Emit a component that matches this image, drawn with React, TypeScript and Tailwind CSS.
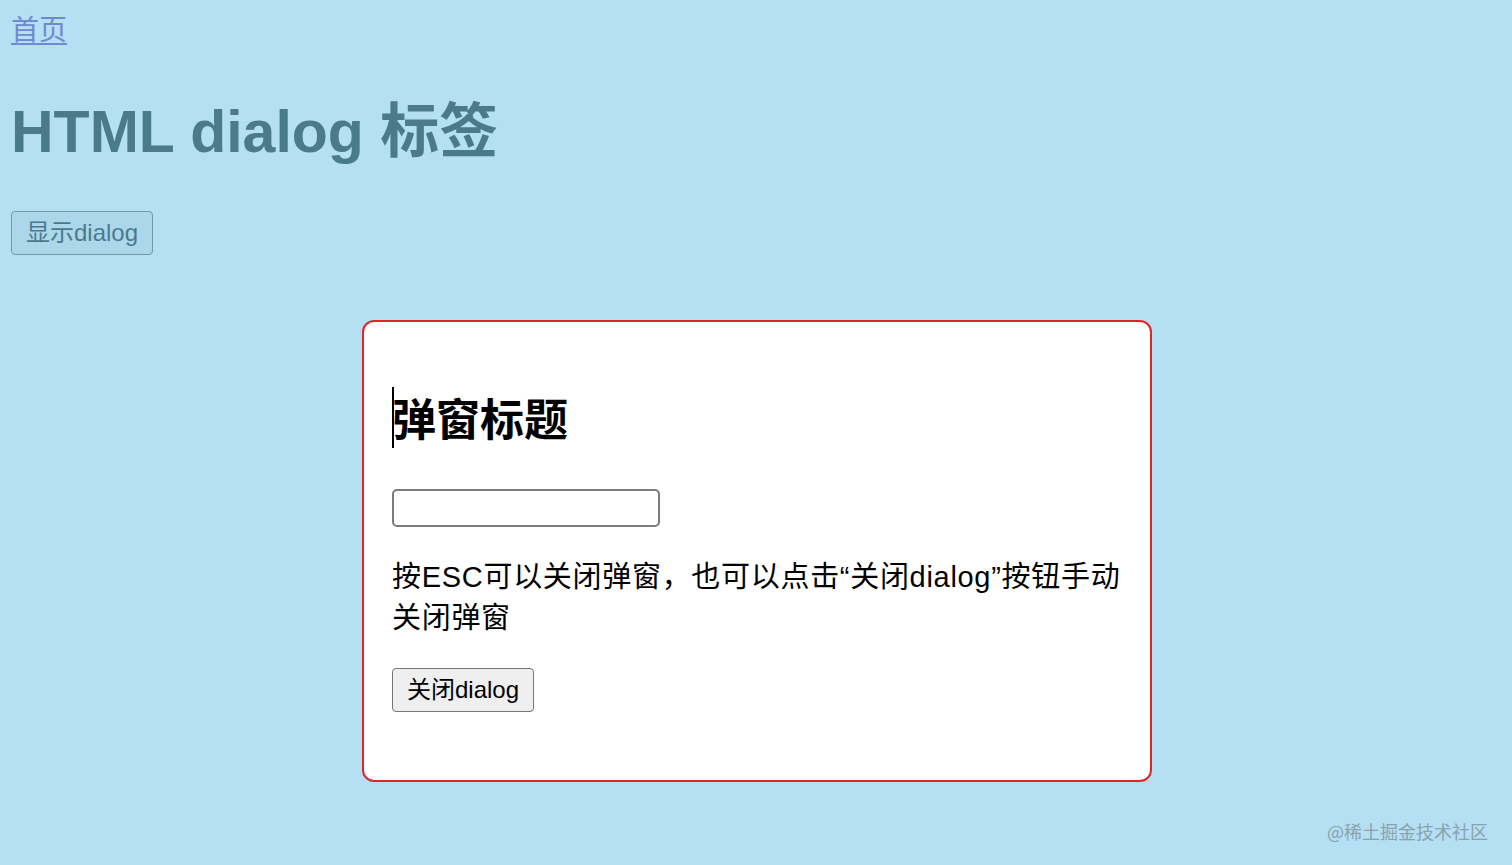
import React from "react";

export default function App() {
  return (
    <div className="relative h-[865px] w-full overflow-hidden bg-[#b5dff2] pl-[11px] pt-[15px] font-['Liberation_Sans','Noto_Sans_CJK_SC',sans-serif]">
      <div className="text-[28px] leading-[32px]">
        <a href="#" className="text-[#7089cf] underline decoration-[#7089cf] underline-offset-[3px]">
          首页
        </a>
      </div>
      <h1 className="mt-[50px] text-[59px] font-bold leading-[70px] text-[#4b7a8c]">
        HTML dialog 标签
      </h1>
      <button className="mt-[44px] flex h-[44px] w-[142px] items-center justify-center rounded-[4px] border-[1.5px] border-[#6f9aac] bg-[#acd6ea] text-[24px] text-[#4b7a8c]">
        显示dialog
      </button>

      <div className="mt-[65px] flex">
        <div className="ml-[351px] w-[790px] rounded-[12px] border-2 border-[#e0242b] bg-white px-[28px] pb-[68px] pt-[65px] text-black">
          <h2 className="relative font-['Noto_Sans_CJK_SC',sans-serif] text-[44px] font-bold leading-[61px]">
            <span className="absolute left-0 top-0 h-[61px] w-[2px] bg-black" />
            弹窗标题
          </h2>
          <input
            type="text"
            className="mt-[41px] block h-[38px] w-[268px] rounded-[5px] border-2 border-[#7c7c7c] bg-white outline-none"
          />
          <p className="mt-[30px] text-[29px] leading-[41px] tracking-[0.7px]">
            按ESC可以关闭弹窗，也可以点击“关闭dialog”按钮手动关闭弹窗
          </p>
          <button className="mt-[29px] flex h-[44px] w-[142px] items-center justify-center rounded-[4px] border-[1.5px] border-[#767676] bg-[#efefef] text-[24px] text-black">
            关闭dialog
          </button>
        </div>
      </div>

      <div className="absolute bottom-[22px] right-[24px] font-['Noto_Sans_CJK_SC',sans-serif] text-[18px] leading-[24px] text-[#8aa2ad]">
        @稀土掘金技术社区
      </div>
    </div>
  );
}
